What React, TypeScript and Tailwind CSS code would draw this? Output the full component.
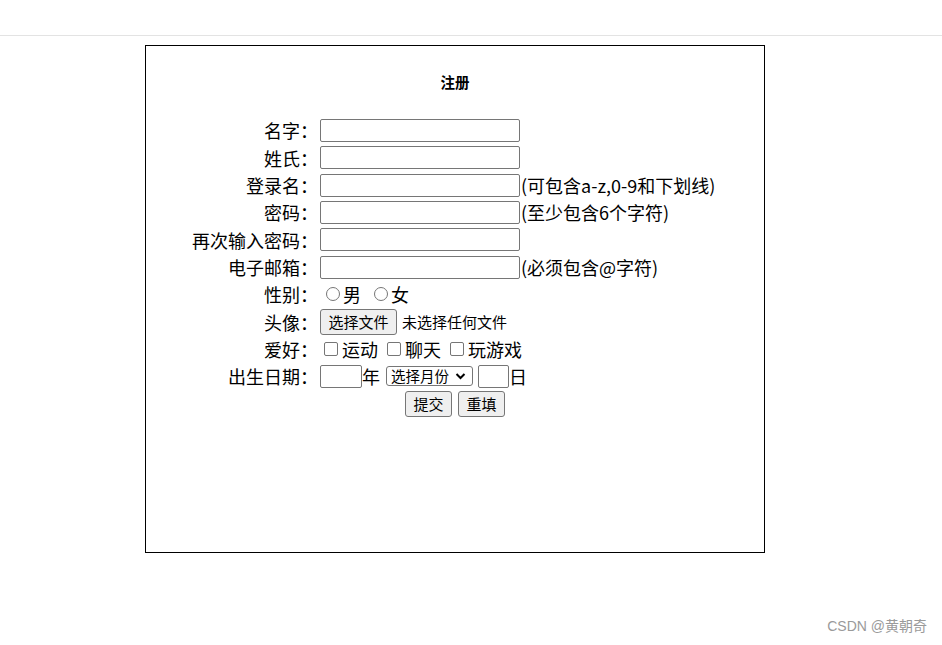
import React from "react";

const Row = ({ label, children }: { label: string; children?: React.ReactNode }) => (
  <div className="flex items-center h-[27.33px]">
    <div className="w-[172px] text-right text-[18px] leading-none whitespace-nowrap">{label}</div>
    <div className="ml-[2px] flex items-center text-[18px] leading-none whitespace-nowrap">{children}</div>
  </div>
);

const Input = ({ w = 200 }: { w?: number }) => (
  <input
    className="h-[23px] border border-[#767676] rounded-[2px] bg-white box-border outline-none"
    style={{ width: w }}
  />
);

const Radio = ({ first }: { first?: boolean }) => (
  <span
    className={
      "inline-block w-[14px] h-[14px] rounded-full border border-[#767676] bg-white mr-[3px] " +
      (first ? "ml-[6px]" : "ml-[13px]")
    }
  />
);

const Check = ({ first }: { first?: boolean }) => (
  <span
    className={
      "inline-block w-[14px] h-[14px] rounded-[2px] border border-[#767676] bg-white mr-[4px] " +
      (first ? "ml-[4px]" : "ml-[9px]")
    }
  />
);

export default function App() {
  return (
    <div className="relative w-[942px] h-[645px] bg-white overflow-hidden text-black font-['Noto_Sans_CJK_SC',sans-serif]">
      <div className="h-[35px] box-content border-b border-[#e3e3e3]" />
      <div className="ml-[145px] mt-[9px] w-[620px] h-[508px] border border-black box-border">
        <div className="mt-[26px] h-[20px] leading-[20px] text-center font-bold text-[14.5px]">注册</div>
        <div className="mt-[24.8px]">
          <Row label="名字："><Input /></Row>
          <Row label="姓氏："><Input /></Row>
          <Row label="登录名：">
            <Input />
            <span className="ml-[1px]">(可包含a-z,0-9和下划线)</span>
          </Row>
          <Row label="密码：">
            <Input />
            <span className="ml-[1px]">(至少包含6个字符)</span>
          </Row>
          <Row label="再次输入密码："><Input /></Row>
          <Row label="电子邮箱：">
            <Input />
            <span className="ml-[1px]">(必须包含@字符)</span>
          </Row>
          <Row label="性别：">
            <Radio first />
            <span>男</span>
            <Radio />
            <span>女</span>
          </Row>
          <Row label="头像：">
            <button className="w-[77px] h-[26px] text-[15px] leading-none bg-[#efefef] border border-[#767676] rounded-[3px] box-border">
              选择文件
            </button>
            <span className="ml-[5px] text-[15px]">未选择任何文件</span>
          </Row>
          <Row label="爱好：">
            <Check first />
            <span>运动</span>
            <Check />
            <span>聊天</span>
            <Check />
            <span>玩游戏</span>
          </Row>
          <Row label="出生日期：">
            <Input w={42} />
            <span>年</span>
            <div className="ml-[6px] w-[87px] h-[20px] border border-[#767676] rounded-[3px] box-border flex items-center pl-[4px] pr-[6px] bg-white">
              <span className="text-[14.5px] leading-none flex-1">选择月份</span>
              <svg width="11" height="8" viewBox="0 0 11 8" fill="none">
                <path d="M1.5 2 L5.5 6 L9.5 2" stroke="#000" strokeWidth="2" />
              </svg>
            </div>
            <span className="ml-[5px]"><Input w={31} /></span>
            <span>日</span>
          </Row>
          <div className="flex items-center justify-center gap-[6px] h-[27.33px]">
            <button className="w-[47px] h-[26px] text-[15px] leading-none bg-[#efefef] border border-[#767676] rounded-[3px] box-border">
              提交
            </button>
            <button className="w-[47px] h-[26px] text-[15px] leading-none bg-[#efefef] border border-[#767676] rounded-[3px] box-border">
              重填
            </button>
          </div>
        </div>
      </div>
      <div className="absolute right-[15px] bottom-[8px] text-[14px] text-[#9a9a9a] font-['Liberation_Sans','Noto_Sans_CJK_SC',sans-serif]">
        CSDN @黄朝奇
      </div>
    </div>
  );
}
